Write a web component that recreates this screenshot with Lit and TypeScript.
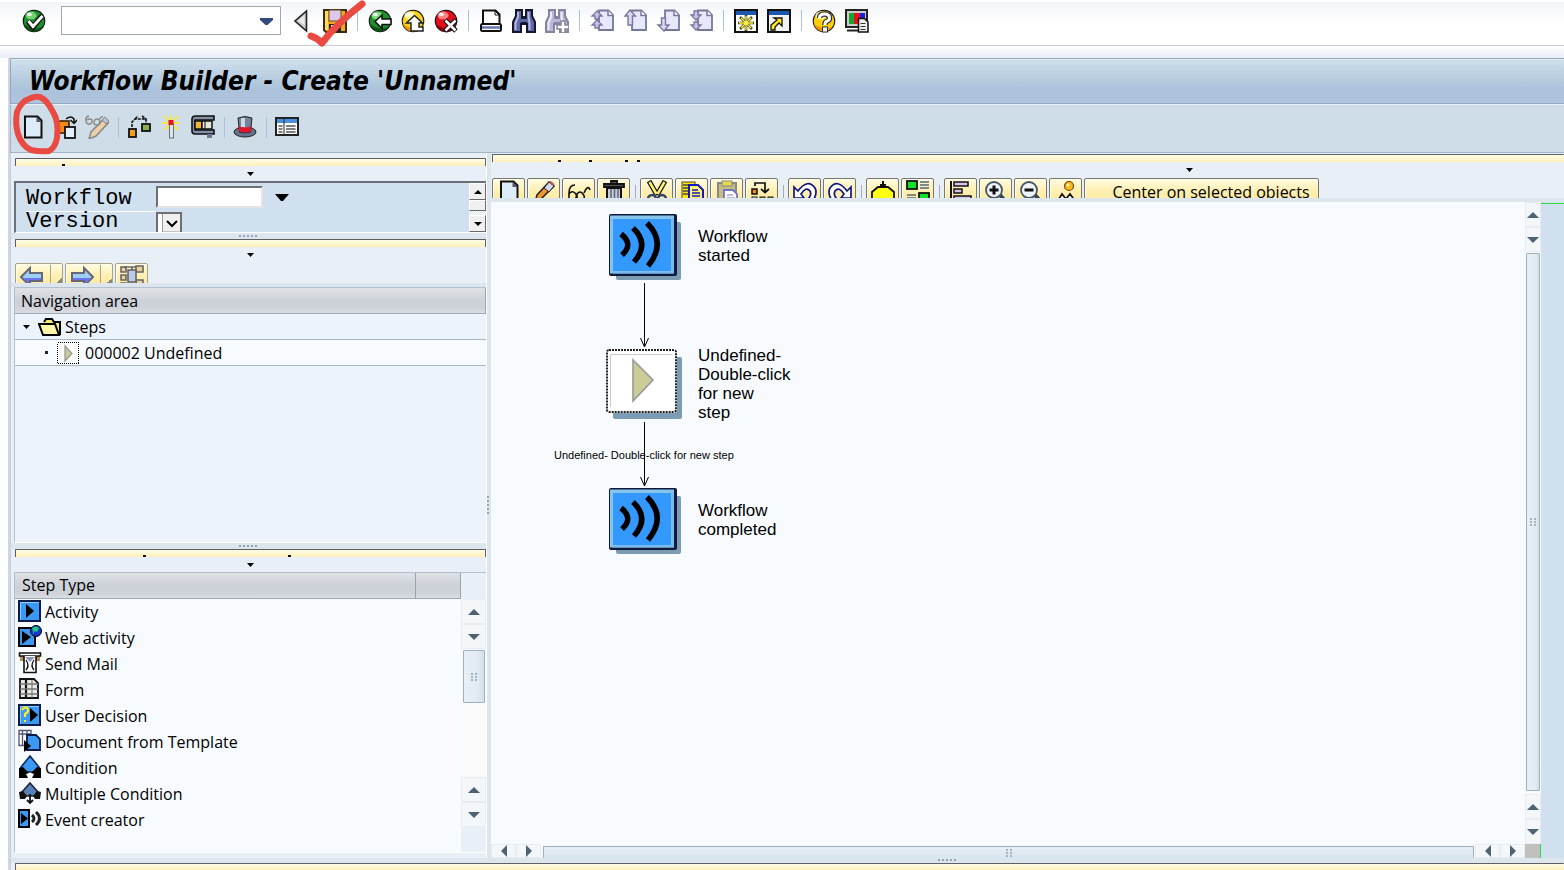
import { LitElement, html, svg, css, SVGTemplateResult, TemplateResult } from "lit";
import { customElement } from "lit/decorators.js";

const draw = (body: SVGTemplateResult, w = 24, h = 24): TemplateResult =>
  html`<svg width=${w} height=${h} viewBox="0 0 ${w} ${h}" aria-hidden="true">${body}</svg>`;

const ball = (a: string, b: string, c: string) => svg`
  <circle cx="12" cy="12" r="11.3" fill="#111"/>
  <circle cx="12" cy="12" r="10.3" fill=${b}/>
  <path d="M2 15a10.300 10.300 0 0 0 19 2q-8 6-19-2" fill=${c}/>
  <ellipse cx="9" cy="6.500" rx="5.500" ry="4" fill=${a}/>
  <ellipse cx="7.500" cy="5.500" rx="2.500" ry="1.800" fill="#fff" opacity=".85"/>`;

const page = (fill = "#dcecf9", stroke = "#111") => svg`
  <path d="M4 1.500h12.500l4 4V22.500H4z" fill=${fill} stroke=${stroke} stroke-width="2"/>
  <path d="M15.500 2v5h5z" fill="#556"/>`;

const fadedPage = (x: number) => svg`
  <path d="M${x} 1.500h9.500l4.500 4.500v15h-14z" fill="#e8e8fc" stroke="#77779c" stroke-width="1.800"/>
  <path d="M${x + 9} 1.500v5h5" fill="#fff" stroke="#77779c" stroke-width="1.500"/>`;

const binoculars = (dark: string, mid: string, light: string) => svg`
  <path d="M4 1h6v7h4V1h6v6l3 6v10h-8v-8H9v8H1V13l3-6z" fill=${mid} stroke=${dark} stroke-width="2"/>
  <path d="M6 3v5l-2.500 6v7M16.500 3v5l1 6v7" fill="none" stroke=${light} stroke-width="2"/>
  <path d="M9 8h6v2H9zM9 13h6v2H9z" fill=${dark}/>`;

const wave = svg`
  <g fill="none" stroke="#000" stroke-width="5.500">
    <path d="M12 20q13 10 1 21"/><path d="M24 14q17 16 1 34"/><path d="M38 9q20 20 1 43"/>
  </g>`;

const blueBox = svg`
  <rect x="1" y="2" width="21" height="20" fill="#3b98f4" stroke="#0c1c4c" stroke-width="2"/>
  <path d="M2.500 20.500V3.500H21" fill="none" stroke="#8ad0ee" stroke-width="1"/>`;

const icons: Record<string, TemplateResult> = {
  ok: draw(svg`${ball("#6fd06f", "#1d8f2c", "#0b5416")}<path d="M6 12l5 6L20.500 6.500" fill="none" stroke="#111" stroke-width="5.500"/><path d="M6.500 12l4.500 5.500L20.500 7" fill="none" stroke="#fff" stroke-width="3"/>`),
  prev: draw(svg`<path d="M16.500 2v20L5 12z" fill="#c9c9c9" stroke="#222" stroke-width="1.600"/><path d="M14.500 6v10L8 12z" fill="#ececec"/>`),
  save: draw(svg`<path d="M1 1h22v22H3l-2-2z" fill="#f0a81e" stroke="#3c2a0c" stroke-width="2"/><path d="M2 2h3v19H2z" fill="#ffdc5a"/><rect x="6" y="1" width="12" height="11" fill="#dcc8ea" stroke="#6a4a18"/><rect x="6" y="15" width="12" height="8" fill="#222"/><rect x="8" y="16" width="4" height="6" fill="#eee"/>`),
  back: draw(svg`${ball("#7ed97e", "#1d8f2c", "#0b5416")}<path d="M7 12.500l7-6.500v4h9v5.500h-9v4z" fill="#fff" stroke="#111" stroke-width="1.600"/>`),
  up: draw(svg`${ball("#fff6a0", "#fbd21a", "#e8960c")}<path d="M13.500 6.500l8 7.500h-3.500v4h4v4H10v-8H5.500z" fill="#fff" stroke="#222" stroke-width="1.500"/>`),
  cancel: draw(svg`${ball("#ff8080", "#e0101c", "#90000c")}<path d="M11 11l11 11M22 11L11 22" stroke="#111" stroke-width="5"/><path d="M11.500 11.500l10 10M21.500 11.500l-10 10" stroke="#fff" stroke-width="2.600"/>`),
  print: draw(svg`<path d="M4 15V1.500h12.500l4 4V15" fill="#fff" stroke="#111" stroke-width="2"/><path d="M16 2v4h4z" fill="#fff" stroke="#111"/><rect x="2" y="15" width="20" height="7" rx="1.500" fill="#fff" stroke="#111" stroke-width="2"/><path d="M3 18.500h18" stroke="#6a74b4" stroke-width="2.500"/>`),
  find: draw(binoculars("#16162e", "#5e66a4", "#b2b8e6")),
  findNext: draw(svg`${binoculars("#84849c", "#b8b8d8", "#ececfa")}<path d="M16 12h4v4h4v4h-4v4h-4v-4h-4v-4h4z" fill="#fff" stroke="#84849c" stroke-width="1.500"/>`),
  first: draw(svg`${fadedPage(9)}<path d="M7 2l5 5H9v3H5V7H2zM7 11l5 5H9v3H5v-3H2z" fill="#c4c4ec" stroke="#77779c" stroke-width="1.300"/>`),
  pageUp: draw(svg`${fadedPage(9)}<path d="M7 1l5.500 6H9.500v9H5V7H2z" fill="#d8d8f4" stroke="#77779c" stroke-width="1.400"/>`),
  pageDown: draw(svg`${fadedPage(9)}<path d="M8 22l-6-6h3.500V9h4v7H13z" fill="#d8d8f4" stroke="#77779c" stroke-width="1.400"/>`),
  last: draw(svg`${fadedPage(9)}<path d="M7 11l5-5H9V2H5v4H2zM7 21l5-5H9v-3H5v3H2z" fill="#c4c4ec" stroke="#77779c" stroke-width="1.300"/>`),
  session: draw(svg`<rect x="1" y="1" width="22" height="22" fill="#fff" stroke="#111" stroke-width="2"/><rect x="2" y="2" width="20" height="4" fill="#1c58b0"/><path d="M12 6v16M4 14h16M6 8l12 12M18 8L6 20" stroke="#4a4a10" stroke-width="2.600"/><path d="M12 7v14M5 14h14M7 9l10 10M17 9L7 19" stroke="#fff04a" stroke-width="1.300"/>`),
  shortcut: draw(svg`<rect x="1" y="1" width="22" height="22" fill="#f2f4f4" stroke="#111" stroke-width="2"/><rect x="2" y="2" width="20" height="4" fill="#1c58b0"/><path d="M4 21v-5l6-5-3-2h8v8l-3-3-4 4v3z" fill="#ffe81e" stroke="#111" stroke-width="1.300"/>`),
  help: draw(svg`${ball("#fff6a0", "#fbcf10", "#f0900c")}<path d="M7.500 9q0-4 5-4t5 4q0 2.500-3 3.500-1.500.500-1.500 3.500" fill="none" stroke="#333" stroke-width="5.500"/><path d="M7.500 9q0-4 5-4t5 4q0 2.500-3 3.500-1.500.500-1.500 3.500" fill="none" stroke="#fff" stroke-width="3"/><rect x="10.500" y="18" width="5" height="5" fill="#fff" stroke="#333"/>`),
  layout: draw(svg`<rect x="1" y="1" width="21" height="17" fill="#ccc" stroke="#222" stroke-width="2"/><path d="M4 4h5v11H4z" fill="#16a82c"/><path d="M9 4h6v11H9z" fill="#e8101c"/><path d="M15 4h5v11h-5z" fill="#1620e0"/><path d="M2 21.500h11" stroke="#222" stroke-width="2"/><path d="M13.500 9.500h6l3.500 3.500v10h-9.500z" fill="#eee" stroke="#111" stroke-width="1.500"/><path d="M15.500 14.500h5M15.500 17.500h5M15.500 20.500h5" stroke="#333"/>`),
  create: draw(page("#dcecf9")),
  other: draw(svg`<rect x="3" y="6" width="13" height="12" fill="#f08c14" stroke="#2a1a06" stroke-width="1.500"/><path d="M13 4q5-4 8 0v4m-3.500-3l3.500 3.500 3-3.500" fill="none" stroke="#111" stroke-width="1.500"/><rect x="12" y="12" width="10" height="11" fill="#e2f0fc" stroke="#111" stroke-width="1.800"/>`),
  toggle: draw(svg`<path d="M20 3l4 4-13 14-7 3 2-7z" fill="#ecd0a8" stroke="#8a8a8a" stroke-width="1.600"/><path d="M17 5l4 4 3-3-4-4z" fill="#b8c0d4" stroke="#8a8a8a"/><path d="M4 1q-4 1-3 5 1 4 4 3t2-4q-2-2-5 0M9 8q0-4 3-4t3 3-3 3-3-2M14 5q2-4 4-3" fill="none" stroke="#8a8a8a" stroke-width="1.400"/>`),
  agents: draw(svg`<rect x="2" y="14" width="7" height="8" fill="#f0a01c" stroke="#111" stroke-width="1.800"/><rect x="15" y="9" width="8" height="7" fill="#8ab04c" stroke="#111" stroke-width="1.800"/><path d="M5 12V7l3-3h11v4M8 4l3-3M15 1l4 3" fill="none" stroke="#111" stroke-width="1.600" stroke-dasharray="3 1"/>`),
  wizard: draw(svg`<path d="M12 0v18M3 8h18M5 1l14 14M19 1L5 15" stroke="#f4e64c" stroke-width="2"/><rect x="10.500" y="9" width="4" height="14" fill="#dce4ea" stroke="#677" stroke-width="1"/><rect x="9.500" y="5" width="5" height="5" fill="#e0142c"/>`),
  test: draw(svg`<path d="M23 1H5Q1 1 1 4v12q0 3 3 3h19v-4H4V5h19z" fill="#8490a8" stroke="#111" stroke-width="1.600"/><rect x="4" y="6" width="7" height="8" fill="#eeb43c" stroke="#111" stroke-width="1.500"/><rect x="11" y="6" width="10" height="8" fill="#e6e6d8" stroke="#111" stroke-width="1.500"/><path d="M14 6v8" stroke="#111"/><path d="M16 19h5v4h-5z" fill="#6c7894"/>`),
  hat: draw(svg`<ellipse cx="12" cy="17" rx="11" ry="5" fill="#65728c" stroke="#222"/><path d="M5 3q7-3 14 0l-1.500 14q-5.500 2-11 0z" fill="#75829c" stroke="#222"/><path d="M8 3h4v9H8z" fill="#ccd6e4"/><path d="M5.800 11q6 3 12.400 0v5q-6 3-12.400 0z" fill="#e0142c"/>`),
  view: draw(svg`<rect x="1" y="3" width="22" height="17" fill="#fff" stroke="#222" stroke-width="2"/><path d="M2 4h20v4H2z" fill="#4a90dc"/><path d="M9 4v15" stroke="#222"/><path d="M3.500 11h4M3.500 14h4M3.500 17h4M11 11h9.500M11 14h9.500M11 17h9.500" stroke="#555" stroke-width="1.500"/>`),
  pencil: draw(svg`<path d="M17 2l5 4L9 19l-6 3 2-7z" fill="#f0962c" stroke="#222" stroke-width="1.500"/><path d="M17 2l5 4-5 6-5-4z" fill="#d4d8ec" stroke="#222"/><path d="M18 1.500l4 3.500" stroke="#cc5560" stroke-width="2"/>`),
  glasses: draw(svg`<path d="M8 5Q2 5 2 13v5q3 4 6 1t0-6-6 1M10 14q3-4 6 0t-1 6-5-3zM17 13q4-9 6-3" fill="none" stroke="#111" stroke-width="1.600"/>`),
  trash: draw(svg`<path d="M9 3V1h6v2M2 4h20v3H2z" fill="#555" stroke="#111" stroke-width="1.800"/><path d="M5 8h14v17H5z" fill="#c4ccda" stroke="#111" stroke-width="2"/><path d="M9 9v15M12.500 9v15M16 9v15" stroke="#667" stroke-width="1.500"/>`),
  cut: draw(svg`<path d="M4 1l8 14M20 1l-8 14" stroke="#111" stroke-width="5"/><path d="M4.500 2l7 12M19.500 2l-7 12" stroke="#fff26a" stroke-width="2.500"/><circle cx="7" cy="19" r="4" fill="none" stroke="#33446c" stroke-width="2.500"/><circle cx="17" cy="19" r="4" fill="none" stroke="#33446c" stroke-width="2.500"/>`),
  copy: draw(svg`<rect x="2" y="2" width="13" height="20" fill="#ffe80c" stroke="#444"/><path d="M3 5h10M3 8h8M3 11h8M3 14h8" stroke="#444" stroke-width="1.300"/><path d="M9 5h9l5 5v14H9z" fill="#fff46c" stroke="#1418c4" stroke-width="2"/><path d="M12 10h6M12 13h8M12 16h8" stroke="#1418c4" stroke-width="1.500"/>`),
  paste: draw(svg`<rect x="3" y="3" width="18" height="20" fill="#c4bc84" stroke="#888" stroke-width="2"/><rect x="7" y="1" width="10" height="5" fill="#e4dc4c" stroke="#888"/><path d="M9 10h9l4 4v10H9z" fill="#fff" stroke="#7474bc" stroke-width="1.800"/><path d="M12 15h6M12 18h8" stroke="#7474bc"/>`),
  block: draw(svg`<rect x="2" y="9" width="5" height="5" fill="#f08a14" stroke="#111" stroke-width="1.500"/><path d="M5 6V3h10v9m-4-3l4 3.500 4-3.500" fill="none" stroke="#111" stroke-width="1.700"/><rect x="2" y="17" width="5" height="6" fill="#eee" stroke="#111"/><rect x="10" y="17" width="5" height="6" fill="#90a840" stroke="#111"/><rect x="18" y="17" width="5" height="6" fill="#90a840" stroke="#111"/>`),
  undo: draw(svg`<path d="M1 7v11h10l-3-4q5-8 9-3 2 4-2 8l4 3q6-8 3-14-7-10-17 3z" fill="#fff" stroke="#101880" stroke-width="1.700"/>`),
  redo: draw(svg`<path d="M23 7v11H13l3-4q-5-8-9-3-2 4 2 8l-4 3Q-1 14 2 8q7-10 17 3z" fill="#fff" stroke="#101880" stroke-width="1.700"/>`),
  activate: draw(svg`<path d="M12 1v6M9 5h6" stroke="#111" stroke-width="2"/><path d="M7 7h10l6 5v13H1V12z" fill="#ffff10" stroke="#111" stroke-width="1.800"/>`),
  status: draw(svg`<rect x="1" y="1" width="10" height="8" fill="#10e428" stroke="#111" stroke-width="1.800"/><path d="M14 2h9M14 5h9M14 8h9M1 15h9M1 18h9" stroke="#567" stroke-width="1.500"/><rect x="13" y="13" width="10" height="8" fill="#10e428" stroke="#111" stroke-width="1.800"/>`),
  align: draw(svg`<path d="M2 1v24" stroke="#111" stroke-width="2"/><rect x="5" y="2" width="14" height="4" fill="#d8c4e8" stroke="#111" stroke-width="1.500"/><rect x="5" y="9" width="8" height="4" fill="#d8c4e8" stroke="#111" stroke-width="1.500"/><rect x="5" y="16" width="17" height="4" fill="#d8c4e8" stroke="#111" stroke-width="1.500"/>`),
  zoomIn: draw(svg`<path d="M16 15l6 7" stroke="#345" stroke-width="4"/><circle cx="10" cy="10" r="8" fill="#eef4f8" stroke="#445566" stroke-width="1.800"/><path d="M10 5.500v9M5.500 10h9" stroke="#111" stroke-width="3"/>`),
  zoomOut: draw(svg`<path d="M16 15l6 7" stroke="#345" stroke-width="4"/><circle cx="10" cy="10" r="8" fill="#eef4f8" stroke="#445566" stroke-width="1.800"/><path d="M5.500 10h9" stroke="#111" stroke-width="3"/>`),
  person: draw(svg`<circle cx="15" cy="6" r="4.500" fill="#f6b81c" stroke="#7a4a0c" stroke-width="1.200"/><circle cx="14" cy="5" r="1.500" fill="#fff6b0"/><path d="M3 22l5-8 4 5 4-5 6 8" fill="#fff" stroke="#111" stroke-width="1.700"/>`),
  navBack: draw(svg`<path d="M1 12l9-9v5h12v8H10v5z" fill="#9cd0f4" stroke="#667" stroke-width="2"/><path d="M3 13h18v2H9v4z" fill="#6a74f0"/>`),
  navNext: draw(svg`<path d="M23 12l-9-9v5H2v8h12v5z" fill="#9cd0f4" stroke="#667" stroke-width="2"/><path d="M21 13H3v2h12v4z" fill="#6a74f0"/>`),
  outline: draw(svg`<path d="M1 2h5v5H1zM1 10h5v5H1zM1 18h5v5H1zM16 1h7v6h-7zM16 15h7v6h-7z" fill="#ecd09c" stroke="#666" stroke-width="1.600"/><rect x="8" y="5" width="8" height="12" fill="#bccce8" stroke="#666" stroke-width="1.600"/><path d="M4 2h12M12 2v3" stroke="#666" stroke-width="1.600"/>`),
  folder: draw(svg`<path d="M6 5l2-3h6l2 3h6v13" fill="#f6e878" stroke="#000" stroke-width="2"/><path d="M1 7h16l4 11H5z" fill="#fff6a8" stroke="#000" stroke-width="2"/>`, 24, 20),
  step: draw(svg`<rect x=".5" y=".5" width="21" height="21" fill="#fff" stroke="#000" stroke-dasharray="1 1" shape-rendering="crispEdges"/><path d="M8 4v15l7-7.500z" fill="#cccc99" stroke="#999" stroke-width="1.300"/>`, 22, 22),
  activity: draw(svg`${blueBox}<path d="M8 5v14l8-7z" fill="#000"/>`),
  web: draw(svg`<rect x="1" y="3" width="16" height="18" fill="#3b98f4" stroke="#000" stroke-width="2"/><path d="M4 6v13l9-7z" fill="#000"/><circle cx="18" cy="6" r="5.500" fill="#1438c8" stroke="#000"/><path d="M14 3q4-3 7 0l-2 4-3-1v4z" fill="#20c888"/>`),
  mail: draw(svg`<path d="M2 5h4v5H2zM18 5h4v5h-4z" fill="#b48c5c"/><path d="M1.500 2h21v3h-21z" fill="#fff" stroke="#111" stroke-width="1.600"/><path d="M6 5v16.500h12V5" fill="#fff" stroke="#111" stroke-width="1.600"/><path d="M7 6h10l-5 5z" fill="#8a96bc"/><path d="M8 9q4 6 0 10M16 9q-4 6 0 10" stroke="#111" stroke-width="1.300" fill="none"/>`),
  form: draw(svg`<path d="M2 2h14l4 4v15H2z" fill="#e8e8e8" stroke="#111" stroke-width="1.800"/><path d="M8 1v21" stroke="#111" stroke-width="2.200"/><path d="M14 3v18" stroke="#666"/><path d="M2 7h18M2 12h18M2 17h18" stroke="#777" stroke-width="1.500"/>`),
  decision: draw(svg`${blueBox}<path d="M12 5v14l8-7z" fill="#000"/><path d="M4 7q3-4 6-1 1 3-3 5v3M7 17v2" fill="none" stroke="#ffee20" stroke-width="2.200"/>`),
  template: draw(svg`<path d="M1 1.500h12v15H1zM1 5h12M4.500 1.500v15M9 1.500v15" fill="#fff" stroke="#55557c" stroke-width="1.300"/><path d="M9 6h9l4 4v11H9z" fill="#3b98f4" stroke="#0c1c4c" stroke-width="1.800"/><path d="M6 11v12l7-6z" fill="#000"/>`),
  condition: draw(svg`<path d="M12 1l9 11q1 5-5 5H8q-6 0-5-5z" fill="#3b98f4" stroke="#0c2c5c" stroke-width="1.600"/><path d="M1 13l4-1 6 6-3 1 2 4H1zM23 13l-4-1-6 6 3 1-2 4h9z" fill="#000"/>`),
  multi: draw(svg`<path d="M12 2l8 9q0 4-4 4H8q-4 0-4-4z" fill="#5880b8" stroke="#223" stroke-width="1.600"/><path d="M1 11l4-1 4 5-2 3H2zM23 11l-4-1-4 5 2 3h5z" fill="#111"/><path d="M12 13v8M9 19l3 3 3-3" stroke="#111" stroke-width="1.800" fill="none"/>`),
  event: draw(svg`<rect x="1" y="3" width="10" height="17" fill="#3b98f4" stroke="#000" stroke-width="2"/><path d="M3 6v11l7-5.500z" fill="#000"/><path d="M14 8q4 3.500 0 7M18 5q7 6.500 0 13" fill="none" stroke="#222" stroke-width="3"/>`),
};

const mainBar: [string, string][][] = [
  [["back", "Back"], ["up", "Exit"], ["cancel", "Cancel"]],
  [["print", "Print"], ["find", "Find"], ["findNext", "Find next"]],
  [["first", "First page"], ["pageUp", "Previous page"], ["pageDown", "Next page"], ["last", "Last page"]],
  [["session", "New session"], ["shortcut", "Create shortcut"]],
  [["help", "Help"], ["layout", "Customize layout"]],
];
const appBar: [string, string][][] = [
  [["create", "Create new workflow"], ["other", "Other workflow"], ["toggle", "Display and change"]],
  [["agents", "Agents"], ["wizard", "Wizards"], ["test", "Test"]],
  [["hat", "Basic data"]],
  [["view", "Views"]],
];
const editBar: [string, string][][] = [
  [["create", "Create"], ["pencil", "Change"], ["glasses", "Display"], ["trash", "Delete"]],
  [["cut", "Cut"], ["copy", "Copy"], ["paste", "Paste"], ["block", "Block"]],
  [["undo", "Undo"], ["redo", "Redo"]],
  [["activate", "Activate"], ["status", "Status"]],
  [["align", "Align"], ["zoomIn", "Zoom in"], ["zoomOut", "Zoom out"], ["person", "Agent"]],
];
const stepTypes: [string, string][] = [
  ["activity", "Activity"], ["web", "Web activity"], ["mail", "Send Mail"],
  ["form", "Form"], ["decision", "User Decision"], ["template", "Document from Template"],
  ["condition", "Condition"], ["multi", "Multiple Condition"], ["event", "Event creator"],
];

@customElement("app-root")
export class AppRoot extends LitElement {
  static styles = css`
    :host {
      display: flex; flex-direction: column; height: 100vh; min-height: 640px; overflow: hidden;
      background: #fff; color: #000; position: relative;
      font: 16px/26px "Open Sans", "Noto Sans", sans-serif;
    }
    * { box-sizing: border-box; }
    svg { display: block; flex: none; }
    button { font: inherit; color: inherit; padding: 0; border: 0; background: none; display: flex; align-items: center; justify-content: center; }
    .system { display: flex; align-items: center; gap: 9px; height: 46px; padding: 0 22px 4px; flex: none;
      background: linear-gradient(#fff 2px, #f3f5fa 2px, #fff 24px); border-bottom: 1px solid #c8cad8; }
    .command { position: relative; width: 220px; height: 29px; margin-left: 6px; }
    .command input { width: 100%; height: 100%; border: 1px solid #a0a8b4; background: #fff; font: inherit; padding: 0 28px 0 6px; }
    .command button { position: absolute; right: 8px; top: 10px; }
    .sep { flex: none; width: 3px; height: 21px; background: linear-gradient(90deg, transparent 1px, #a8c4dc 1px, #a8c4dc 2px, transparent 2px); }
    .app .sep { width: 2px; }
    .frame { flex: 1; min-height: 0; display: flex; flex-direction: column; padding: 12px 0 0 8px;
      background: linear-gradient(#fff, #e8eef5 12px, transparent 12px); }
    .window { flex: 1; min-height: 0; display: flex; flex-direction: column; border-left: 2px solid #cfd5e2; }
    h1 { margin: 0; height: 46px; padding: 0 18px; flex: none; font: italic bold 26px/45px "DejaVu Sans Condensed", "Open Sans", sans-serif;
      border: 1px solid #93a7bf; border-right: 0; white-space: nowrap;
      background: linear-gradient(#d0e0ed, #b4cadd 50%, #abc2db 70%, #afc4dc); box-shadow: inset 0 1px #e2ecf4; }
    .app { display: flex; align-items: center; gap: 8px; height: 49px; padding: 0 10px 3px; flex: none;
      background: #cfdde8; border: 1px solid #a0b3c6; border-top-color: #e8f0f6; border-right: 0; }
    .work { flex: 1; min-height: 0; display: flex; background: #e8eff7; border-left: 1px solid #c4d0de; }
    .left { width: 476px; flex: none; display: flex; flex-direction: column; min-height: 0; padding-top: 5px; border-right: 1px solid #fff; }
    .strip { height: 8px; flex: none; margin-left: 4px; border: 1px solid #5f6066; border-bottom: 0; border-radius: 1px 1px 0 0;
      background: linear-gradient(#fffbe2 1px, #fff0b8); overflow: hidden; }
    .right .strip { margin-left: 1px; border-right: 0; }
    .foot .strip { height: 7px; border-right: 0; }
    .foot .bar { height: 5px; padding-left: 320px; }
    .strip svg { margin-top: 5px; }
    .collapse { width: 100%; height: 15px; flex: none; padding-left: 4px; }
    .collapse.tall { height: 16px; }
    .right .collapse { height: 16px; padding-left: 324px; }
    .bar { height: 6px; flex: none; background: #dce6ec; display: flex; justify-content: center; align-items: center; }
    .bar.thin { height: 4px; }
    .upright { width: 4px; flex: none; background: #dce6ec; display: flex; align-items: center; }
    .fields { height: 52px; flex: none; display: flex; margin-left: 3px; overflow: hidden; background: #d1e0ef;
      border: 2px solid #6c7078; border-right-width: 0; border-bottom: 1px solid #fff; }
    .grid { flex: 1; padding: 2px 0 0 10px; display: grid; grid-template-columns: 130px 107px auto; grid-template-rows: 27px 20px; justify-content: start; align-items: start;
      font: 22px/20px "Liberation Mono", monospace; }
    .grid label { height: 20px; }
    .grid .ruled { border-bottom: 1px solid #fff; height: 27px; line-height: 27px; }
    .grid input { width: 107px; height: 22px; margin-top: 1px; border: 2px solid; border-color: #707070 #e4e4e4 #e4e4e4 #707070; background: #fff; }
    .pick { margin: 8px 0 0 12px; }
    .drop { position: relative; width: 26px; height: 22px; }
    .drop select { display: block; appearance: none; width: 26px; height: 22px; border: 2px solid #707070; background: #fff; border-radius: 0; }
    .drop svg { position: absolute; left: 6px; top: 2px; pointer-events: none; background: #f0f0f0; }
    .classic { width: 17px; flex: none; display: flex; flex-direction: column; background: repeating-conic-gradient(#fff 0 25%, #dde3e8 0 50%) 0 0 / 2px 2px; }
    .classic button { height: 17px; background: #f0f0f0; border: 1px solid; border-color: #fff #696969 #696969 #fff; flex: none; }
    .classic i { height: 11px; margin-bottom: auto; background: #f0f0f0; border: 1px solid; border-color: #fff #696969 #696969 #fff; }
    .tools { display: flex; align-items: flex-start; gap: 2px; height: 20px; overflow: hidden; flex: none; margin-left: 4px; }
    .right .tools { margin-left: 1px; }
    .tool { width: 33px; height: 28px; flex: none; border: 1px solid #77776c; border-radius: 2px; padding-top: 1px;
      background: linear-gradient(#fffbe0, #ffeead 50%, #fde9a0); align-items: flex-start; box-shadow: inset 1px 1px #fffdf0; }
    .tool.wide { width: 235px; padding-left: 19px; line-height: 24px; }
    .tool.split { width: 48px; justify-content: flex-start; gap: 6px; padding-left: 4px; }
    .left .tool { border-color: #a8a48c; }
    .split .edge { width: 1px; height: 28px; background: #a8a48c; }
    .split .more { width: 5px; height: 5px; margin-top: 13px; background: linear-gradient(135deg, transparent 50%, #88887c 50%); }
    .tools .gap { width: 6px; height: 15px; margin-top: 7px; flex: none; background: linear-gradient(90deg, transparent 3px, #a8acb0 3px, #a8acb0 4px, transparent 4px); }
    .nav { flex: 1; min-height: 0; margin-left: 3px; border: 1px solid #b4bfd0; border-right: 0; border-bottom-color: #fff; background: #ecf3fb; }
    .head { height: 26px; padding-left: 6px; background: linear-gradient(#dfe2e5, #cdd1d8 50%, #cdd1d8 75%, #dadde2); border-bottom: 1px solid #a0abb8; border-right: 1px solid #98a4b0; }
    .row { display: flex; align-items: center; height: 26px; border-bottom: 1px solid #a9b6c8; }
    .row.leaf { background: #f7fbff; padding-left: 30px; }
    .row .twist { width: 23px; padding-left: 1px; }
    .row .dot { width: 3px; height: 3px; background: #222; margin-right: 9px; }
    .row .name { padding-left: 6px; }
    .row .near { padding-left: 3px; }
    .types { height: 281px; flex: none; margin-left: 3px; display: flex; border: 1px solid #b4bfd0; border-right: 0; border-bottom-color: #fff; }
    table { width: 100%; border-collapse: separate; border-spacing: 0; background: #f7fbff; }
    .sheet { flex: 1; background: #f7fbff; }
    th { font-weight: normal; text-align: left; height: 26px; line-height: 25px; padding: 0 0 0 7px; border-right: 1px solid #98a4b0; border-bottom: 1px solid #a0abb8;
      background: linear-gradient(#dfe2e5, #cdd1d8 50%, #cdd1d8 75%, #dadde2); }
    th.slim { width: 45px; }
    td { height: 26px; padding: 0; }
    td div { display: flex; align-items: center; gap: 3px; padding-left: 3px; height: 26px; }
    td svg { margin-bottom: 2px; }
    .scroll { display: flex; flex: none; background: #fafafa; min-width: 0; min-height: 0; }
    .scroll button { flex: none; background: #f4f7fa; border: 1px solid #e9edf2; }
    .scroll .thumb { border: 1px solid #9eafbe; border-radius: 1px; background: linear-gradient(90deg, #e8eff5, #e2ebf3 65%, #d2dfe9);
      display: flex; align-items: center; justify-content: center; }
    .down { flex-direction: column; }
    .down button { width: 100%; height: 25px; }
    .across button { width: 25px; height: 100%; }
    .across .thumb { flex: 1; background: linear-gradient(#e8eff5, #d8e4ed); margin: 2px 1px 0 2px; border-bottom: 0; }
    .list { width: 25px; margin: 26px 0 25px; }
    .list .thumb { height: 53px; margin: 1px 1px 0 2px; }
    .fill { flex: 1; }
    .pad { height: 5px; flex: none; }
    .right { flex: 1; min-width: 0; display: flex; flex-direction: column; padding-top: 1px; }
    .stage { flex: 1; min-height: 0; display: flex; background: #d1e0ef; }
    .view { flex: 1; min-width: 0; display: flex; flex-direction: column; background: #f7fbff; }
    .canvas { flex: 1; min-height: 0; position: relative; overflow: hidden; font: 17px/19px "Liberation Sans", Arial, sans-serif; }
    .side { width: 16px; flex: none; display: flex; flex-direction: column; }
    .side .scroll { flex: 1; }
    .side .thumb { flex: 1; margin: 1px 1px 3px; }
    .corner { height: 14px; background: #c0c0c0; border-right: 1px solid #2ee03c; }
    .across { height: 14px; }
    .margin { width: 23px; flex: none; margin-top: 1px; border-top: 1px solid #2ee03c; }
    .node, .link, .caption, .note { position: absolute; }
    .n1 { left: 118px; top: 12px; } .n2 { left: 115px; top: 147px; } .n3 { left: 118px; top: 286px; }
    .l1 { left: 148px; top: 81px; } .l2 { left: 148px; top: 220px; }
    .caption { left: 207px; }
    .c1 { top: 25px; } .c2 { top: 144px; } .c3 { top: 299px; }
    .note { left: 63px; top: 247px; font-size: 11px; line-height: 13px; white-space: nowrap; }
    .foot { flex: none; background: #e8eff7; border-left: 1px solid #c4d0de; }
    .mark { position: absolute; left: 0; top: 0; pointer-events: none; }
  `;

  private tri(dir: string, size = 12, color = "#4f6272") {
    const d: Record<string, string> = { up: "M0 9L6 3l6 6z", down: "M0 3h12L6 9z", left: "M9 0v12L3 6z", right: "M3 0v12l6-6z" };
    return html`<svg width=${size} height=${size} viewBox="0 0 12 12" aria-hidden="true"><path d=${d[dir]} fill=${color}/></svg>`;
  }
  private caret(cls = "") {
    return html`<button class="collapse ${cls}" aria-label="Collapse area">${draw(svg`<path d="M0 1h7L3.500 5z" fill="#000"/>`, 7, 6)}</button>`;
  }
  private group(groups: [string, string][][], cls: string, sep: string) {
    return groups.map((g, i) => html`${i ? html`<span class=${sep}></span>` : ""}${g.map(([k, label]) =>
      html`<button class=${cls} aria-label=${label} title=${label}>${icons[k]}</button>`)}`);
  }
  private strip(marks: number[] = []) {
    return html`<div class="strip">${marks.length ? draw(svg`${marks.map((x) => svg`<rect x=${x} y="0" width="3" height="2" fill="#111"/>`)}`, 460, 3) : ""}</div>`;
  }
  private dots(n = 5) {
    return draw(svg`${Array.from({ length: n }, (_, i) => svg`<rect x=${i * 4} y="0" width="2" height="2" fill="#93a3b1"/>`)}`, n * 4, 3);
  }
  private grip() {
    return draw(svg`<path d="M0 0h2v2H0zM4 0h2v2H4zM0 3h2v2H0zM4 3h2v2H4zM0 6h2v2H0zM4 6h2v2H4z" fill="#a3b3c0"/>`, 6, 8);
  }
  private pair(a: string, b: string, where: string) {
    return html`<button aria-label="Scroll ${a} ${where}">${this.tri(a)}</button><button aria-label="Scroll ${b} ${where}">${this.tri(b)}</button>`;
  }
  private eventNode(cls: string) {
    return html`<div class="node ${cls}">${draw(svg`
      <rect x="7" y="8" width="65" height="58" rx="2" fill="#7b9cb2"/>
      <rect x="0" y="0" width="68" height="62" rx="2" fill="#10183c"/>
      <rect x="1" y="1.500" width="64" height="58" fill="#86c4ec"/>
      <rect x="4" y="5" width="58" height="52" fill="#3399ff"/>
      <path d="M63.500 4v54.500H4" fill="none" stroke="#78b8e8" stroke-width="2"/>
      ${wave}`, 72, 67)}</div>`;
  }
  private arrow(cls: string) {
    return html`<div class="link ${cls}">${draw(svg`<path d="M5.500 0v64M1.500 55l4 9 4-9" fill="none" stroke="#000"/>`, 11, 66)}</div>`;
  }

  render() {
    return html`
      <header class="system">
        <button aria-label="Enter">${icons.ok}</button>
        <div class="command">
          <input aria-label="Command" />
          <button aria-label="Command history">${draw(svg`<path d="M0 2h13v2L7.500 9h-2L0 4z" fill="#324a7c"/>`, 13, 10)}</button>
        </div>
        <button aria-label="Hide command field">${icons.prev}</button>
        <button aria-label="Save">${icons.save}</button>
        <span class="sep"></span>
        ${this.group(mainBar, "plain", "sep")}
      </header>
      <div class="frame">
        <div class="window">
          <h1>Workflow Builder - Create 'Unnamed'</h1>
          <div class="app">${this.group(appBar, "plain", "sep")}</div>
          <main class="work">
            <section class="left">
              ${this.strip([46])}
              ${this.caret()}
              <div class="fields">
                <div class="grid">
                  <label class="ruled" for="wf">Workflow</label><input id="wf" />
                  <button class="pick" aria-label="Workflow values">${draw(svg`<path d="M0 1h14L8 8H6z" fill="#000"/>`, 14, 9)}</button>
                  <label for="ver">Version</label>
                  <div class="drop"><select id="ver"><option></option></select>${draw(svg`<path d="M.500 0v18h17.500" fill="none" stroke="#999"/><path d="M5 7l5 5 5-5" fill="none" stroke="#000" stroke-width="2"/>`, 18, 18)}</div>
                </div>
                <div class="classic">
                  <button aria-label="Scroll up">${this.tri("up", 8, "#000")}</button><i></i>
                  <button aria-label="Scroll down">${this.tri("down", 8, "#000")}</button>
                </div>
              </div>
              <div class="bar">${this.dots()}</div>
              ${this.strip()}
              ${this.caret("tall")}
              <div class="tools">
                <button class="tool split" aria-label="Previous">${icons.navBack}<span class="edge"></span><span class="more"></span></button>
                <button class="tool split" aria-label="Next">${icons.navNext}<span class="edge"></span><span class="more"></span></button>
                <button class="tool" aria-label="Outline">${icons.outline}</button>
              </div>
              <div class="bar thin"></div>
              <div class="nav">
                <div class="head">Navigation area</div>
                <div class="row"><span class="twist">${draw(svg`<path d="M7 7h7l-3.500 4z" fill="#000"/>`, 20, 18)}</span>${icons.folder}<span class="near">Steps</span></div>
                <div class="row leaf"><span class="dot"></span>${icons.step}<span class="name">000002 Undefined</span></div>
              </div>
              <div class="bar">${this.dots()}</div>
              ${this.strip([127, 272])}
              ${this.caret()}
              <div class="types">
                <div class="sheet">
                  <table>
                    <thead><tr><th>Step Type</th><th class="slim" aria-label="Details"></th></tr></thead>
                    <tbody>${stepTypes.map(([k, n]) => html`<tr><td colspan="2"><div>${icons[k]}<span>${n}</span></div></td></tr>`)}</tbody>
                  </table>
                </div>
                <div class="scroll down list">
                  ${this.pair("up", "down", "list start")}
                  <div class="thumb">${this.grip()}</div><div class="fill"></div>
                  ${this.pair("up", "down", "list end")}
                </div>
              </div>
              <div class="pad"></div>
            </section>
            <div class="upright">${draw(svg`${[0, 4, 8, 12, 16].map((y) => svg`<rect x="0" y=${y} width="2" height="2" fill="#93a3b1"/>`)}`, 3, 20)}</div>
            <section class="right">
              ${this.strip([65, 96, 132, 144])}
              ${this.caret()}
              <div class="tools">${this.group(editBar, "tool", "gap")}<button class="tool wide">Center on selected objects</button></div>
              <div class="bar thin"></div>
              <div class="stage">
                <div class="view">
                  <div class="canvas">
                    ${this.eventNode("n1")}
                    <div class="caption c1">Workflow<br />started</div>
                    ${this.arrow("l1")}
                    <div class="node n2">${draw(svg`
                      <rect x="7" y="8" width="69" height="62" rx="2" fill="#7b9cb2"/>
                      <rect x="1" y="1" width="69" height="62" rx="2" fill="#fff" stroke="#fff" stroke-width="2"/>
                      <rect x="1" y="1" width="69" height="62" rx="2" fill="none" stroke="#222" stroke-width="2" stroke-dasharray="2 1"/>
                      <path d="M4.500 58V5.500H66" fill="none" stroke="#ccc"/>
                      <path d="M27 11v41l20-21z" fill="#cccc99" stroke="#999" stroke-width="1.600"/>`, 76, 70)}</div>
                    <div class="caption c2">Undefined-<br />Double-click<br />for new<br />step</div>
                    ${this.arrow("l2")}
                    <div class="note">Undefined- Double-click for new step</div>
                    ${this.eventNode("n3")}
                    <div class="caption c3">Workflow<br />completed</div>
                  </div>
                  <div class="scroll across">
                    ${this.pair("left", "right", "canvas start")}
                    <div class="thumb">${this.grip()}</div>
                    ${this.pair("left", "right", "canvas end")}
                  </div>
                </div>
                <div class="side">
                  <div class="scroll down">
                    ${this.pair("up", "down", "canvas top")}
                    <div class="thumb">${this.grip()}</div>
                    ${this.pair("up", "down", "canvas bottom")}
                  </div>
                  <div class="corner"></div>
                </div>
                <div class="margin"></div>
              </div>
            </section>
          </main>
          <footer class="foot"><div class="bar">${this.dots()}</div>${this.strip()}</footer>
        </div>
      </div>
      <div class="mark">${draw(svg`
        <path d="M311 36q6 2 11 7Q336 24 362 4" fill="none" stroke="#e94b43" stroke-width="7" stroke-linecap="round" stroke-linejoin="round"/>
        <path d="M31 98q-10 3-14 14-2 12 1 22 4 12 13 16 9 2 18 1 6-3 8-13 2-17-4-26-6-12-13-15-5-1-9 1z" fill="none" stroke="#e94b43" stroke-width="6" stroke-linejoin="round"/>`, 400, 160)}</div>
    `;
  }
}
